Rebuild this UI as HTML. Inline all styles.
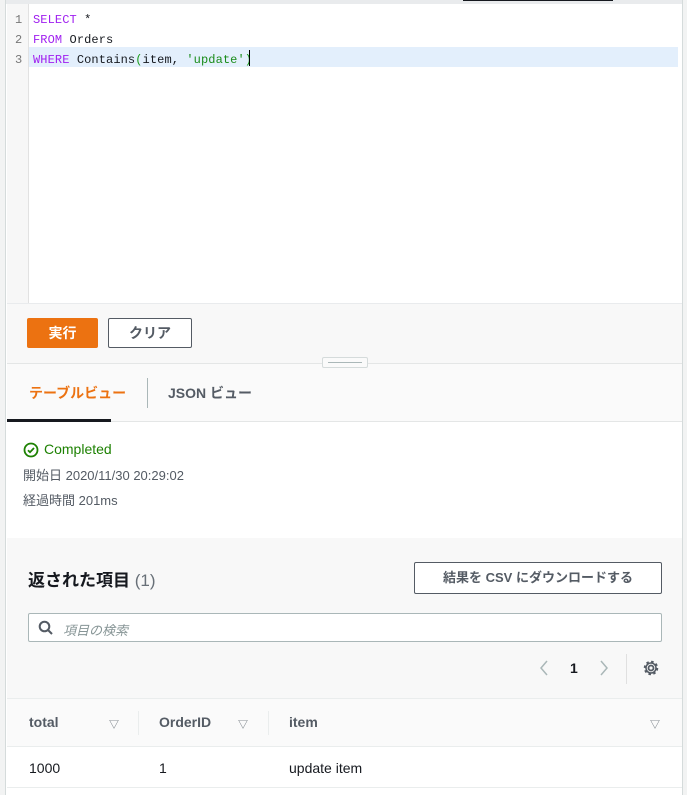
<!DOCTYPE html>
<html><head><meta charset="utf-8"><style>
*{box-sizing:border-box;margin:0;padding:0}
body{width:687px;height:795px;overflow:hidden;background:#fff;font-family:"Liberation Sans","Noto Sans CJK JP",sans-serif;color:#16191f;position:relative}
.abs{position:absolute}
.mono{font-family:"Liberation Mono",monospace;font-size:12px}
</style></head><body>
<div class="abs" style="left:0;top:0;width:687px;height:4px;background:#e9ebed"></div>
<div class="abs" style="left:463px;top:0;width:150px;height:1px;background:#16191f"></div>
<div class="abs" style="left:0;top:0;width:6px;height:795px;background:#f2f3f3;border-right:1px solid #d5dbdb"></div>
<div class="abs" style="left:682px;top:0;width:5px;height:795px;background:#f2f3f3;border-left:1px solid #d5dbdb"></div>
<!-- editor -->
<div class="abs" style="left:7px;top:4px;width:22px;height:299px;background:#f7f7f7;border-right:1px solid #e2e2e2"></div>
<div class="abs" style="left:29px;top:47px;width:649px;height:20px;background:#e3effc"></div>
<div class="abs mono" style="left:15px;top:10px;color:#777;line-height:20px">1<br>2<br>3</div>
<div class="abs mono" style="left:33px;top:10px;line-height:20px;white-space:pre;letter-spacing:0.1px"><span style="color:#a020f0">SELECT</span> *
<span style="color:#a020f0">FROM</span> Orders
<span style="color:#a020f0">WHERE</span> Contains<span style="color:#1a9c1a">(</span>item, <span style="color:#1a8c1a">'update'</span><span style="color:#1a9c1a">)</span></div>
<div class="abs" style="left:249px;top:50px;width:1px;height:16px;background:#000"></div>
<!-- buttons bar -->
<div class="abs" style="left:7px;top:303px;width:675px;height:60px;background:#f8f8f8;border-top:1px solid #e9ebed"></div>
<div class="abs" style="left:27px;top:318px;width:71px;height:30px;background:#ec7211;border-radius:2px;color:#fff;font-weight:bold;font-size:14px;text-align:center;line-height:30px">実行</div>
<div class="abs" style="left:108px;top:318px;width:84px;height:30px;background:#fff;border:1px solid #545b64;border-radius:2px;color:#545b64;font-weight:bold;font-size:14px;text-align:center;line-height:28px">クリア</div>
<div class="abs" style="left:7px;top:363px;width:675px;height:59px;background:#fafafa;border-top:1px solid #e4e6e6;border-bottom:1px solid #e4e6e6"></div>
<div class="abs" style="left:322px;top:357px;width:46px;height:11px;background:#fafafa;border:1px solid #d5dbdb;border-radius:2px"></div>
<div class="abs" style="left:328px;top:362px;width:34px;height:1px;background:#aab7b8"></div>
<div class="abs" style="left:29px;top:383px;font-size:14px;font-weight:bold;color:#ec7211">テーブルビュー</div>
<div class="abs" style="left:147px;top:378px;width:1px;height:30px;background:#aab7b8"></div>
<div class="abs" style="left:168px;top:383px;font-size:14px;font-weight:bold;color:#545b64">JSON ビュー</div>
<div class="abs" style="left:7px;top:419px;width:104px;height:3px;background:#16191f"></div>
<!-- status -->
<svg class="abs" style="left:23px;top:442px" width="16" height="16" viewBox="0 0 16 16"><circle cx="8" cy="8" r="6.5" fill="none" stroke="#1d8102" stroke-width="1.8"/><path d="M5 8.2l2 2 4-4.2" fill="none" stroke="#1d8102" stroke-width="1.8"/></svg>
<div class="abs" style="left:44px;top:441px;font-size:14px;color:#1d8102">Completed</div>
<div class="abs" style="left:23px;top:465px;font-size:13px;color:#545b64">開始日 2020/11/30 20:29:02</div>
<div class="abs" style="left:23px;top:490px;font-size:13px;color:#545b64">経過時間 201ms</div>
<!-- results -->
<div class="abs" style="left:7px;top:538px;width:675px;height:160px;background:#f8f8f8"></div>
<div class="abs" style="left:28px;top:566px;font-size:17px;font-weight:bold">返された項目 <span style="font-weight:normal;color:#687078">(1)</span></div>
<div class="abs" style="left:414px;top:562px;width:248px;height:32px;background:#fff;border:1px solid #545b64;border-radius:2px;color:#545b64;font-weight:bold;font-size:13px;text-align:center;line-height:30px">結果を CSV にダウンロードする</div>
<div class="abs" style="left:28px;top:613px;width:634px;height:29px;background:#fff;border:1px solid #aab7b8;border-radius:2px"></div>
<svg class="abs" style="left:38px;top:620px" width="16" height="16" viewBox="0 0 16 16"><circle cx="6.5" cy="6.5" r="4.8" fill="none" stroke="#545b64" stroke-width="2"/><path d="M10 10l4 4" stroke="#545b64" stroke-width="2"/></svg>
<div class="abs" style="left:63px;top:620px;font-size:13px;color:#879596;font-style:italic">項目の検索</div>
<svg class="abs" style="left:538px;top:659px" width="12" height="18" viewBox="0 0 12 18"><path d="M9 2L3 9l6 7" fill="none" stroke="#aab7b8" stroke-width="1.5"/></svg>
<div class="abs" style="left:570px;top:660px;font-size:14px;font-weight:bold">1</div>
<svg class="abs" style="left:598px;top:659px" width="12" height="18" viewBox="0 0 12 18"><path d="M3 2l6 7-6 7" fill="none" stroke="#aab7b8" stroke-width="1.5"/></svg>
<div class="abs" style="left:626px;top:654px;width:1px;height:30px;background:#e0e0e0"></div>
<svg class="abs" style="left:642px;top:659px" width="18" height="18" viewBox="0 0 18 18"><circle cx="9" cy="9" r="2.5" fill="none" stroke="#545b64" stroke-width="1.8"/><circle cx="9" cy="9" r="6" fill="none" stroke="#545b64" stroke-width="2.5" stroke-dasharray="2.4 2.3"/><circle cx="9" cy="9" r="5" fill="none" stroke="#545b64" stroke-width="1.5"/></svg>
<!-- table -->
<div class="abs" style="left:7px;top:698px;width:675px;height:49px;background:#fafafa;border-top:1px solid #eaeded;border-bottom:1px solid #eaeded"></div>
<div class="abs" style="left:29px;top:714px;font-size:14px;font-weight:bold;color:#545b64">total</div>
<div class="abs" style="left:109px;top:716px;font-size:10px;color:#687078">▽</div>
<div class="abs" style="left:138px;top:711px;width:1px;height:24px;background:#eaeded"></div>
<div class="abs" style="left:159px;top:714px;font-size:14px;font-weight:bold;color:#545b64">OrderID</div>
<div class="abs" style="left:238px;top:716px;font-size:10px;color:#687078">▽</div>
<div class="abs" style="left:268px;top:711px;width:1px;height:24px;background:#eaeded"></div>
<div class="abs" style="left:289px;top:714px;font-size:14px;font-weight:bold;color:#545b64">item</div>
<div class="abs" style="left:650px;top:716px;font-size:10px;color:#687078">▽</div>
<div class="abs" style="left:29px;top:760px;font-size:14px">1000</div>
<div class="abs" style="left:159px;top:760px;font-size:14px">1</div>
<div class="abs" style="left:289px;top:760px;font-size:14px">update item</div>
<div class="abs" style="left:7px;top:787px;width:675px;height:1px;background:#eaeded"></div>
</body></html>
